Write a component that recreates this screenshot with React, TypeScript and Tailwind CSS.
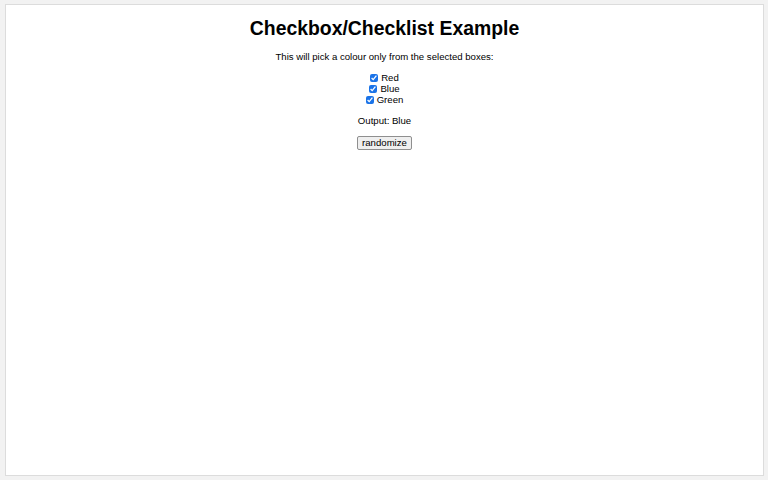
import { useState } from 'react'

const COLOURS = ['Red', 'Blue', 'Green']

export default function App() {
    const [checked, setChecked] = useState<Record<string, boolean>>({
        Red: true,
        Blue: true,
        Green: true,
    })
    const [output, setOutput] = useState('Blue')

    const toggle = (name: string) => {
        setChecked((prev) => ({ ...prev, [name]: !prev[name] }))
    }

    const randomize = () => {
        const pool = COLOURS.filter((name) => checked[name])
        if (!pool.length) {
            setOutput('')
            return
        }
        setOutput(pool[Math.floor(Math.random() * pool.length)])
    }

    return (
        <div className="h-[480px] w-[768px] bg-[#f2f2f2] pt-1 pl-[5px] font-['Liberation_Sans',Arial,sans-serif] text-black">
            <div className="flex h-[472px] w-[759px] flex-col items-center border border-[#dcdcdc] bg-white">
                <h1 className="mt-[11px] text-[19.4px] font-bold leading-[24px]">Checkbox/Checklist Example</h1>
                <p className="mt-[11px] text-[9.6px] leading-[12px]">
                    This will pick a colour only from the selected boxes:
                </p>
                <div className="mt-[9px] flex flex-col items-center">
                    {COLOURS.map((name) => (
                        <label key={name} className="flex h-[11px] items-center gap-[3px] text-[9.6px] leading-[11px]">
                            <input
                                type="checkbox"
                                checked={checked[name]}
                                onChange={() => toggle(name)}
                                className="m-0 h-[8px] w-[8px] accent-[#1a73e8]"
                            />
                            {name}
                        </label>
                    ))}
                </div>
                <p className="mt-[10px] text-[9.6px] leading-[12px]">Output: {output}</p>
                <button
                    onClick={randomize}
                    className="mt-[9px] h-[14px] rounded-[2px] border border-[#8f8f8f] bg-[#efefef] px-[4px] text-[9.6px] leading-[12px]"
                >
                    randomize
                </button>
            </div>
        </div>
    )
}
